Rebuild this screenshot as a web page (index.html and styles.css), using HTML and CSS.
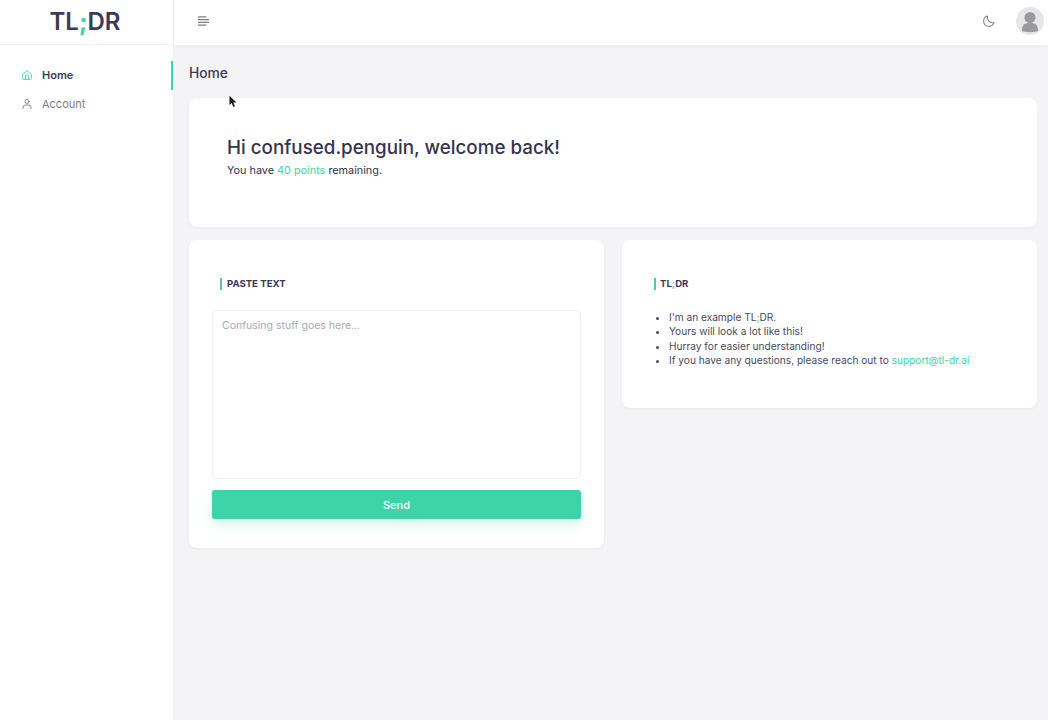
FILE: index.html
```html
<!DOCTYPE html>
<html>
<head>
    <title>TL;DR</title>
    <link rel="stylesheet" href="styles.css">
</head>
<body>
    <aside class="sidebar">
        <div class="logo">TL<span class="accent">;</span>DR</div>
        <nav class="side-nav">
            <a class="nav-item active" href="#">
                <svg class="nav-icon" viewBox="0 0 24 24"><path d="M3 10.5 12 3l9 7.5V19a2 2 0 0 1-2 2H5a2 2 0 0 1-2-2z"/><path d="M9 21v-8a1 1 0 0 1 1-1h4a1 1 0 0 1 1 1v8"/></svg>
                <span>Home</span>
            </a>
            <a class="nav-item" href="#">
                <svg class="nav-icon" viewBox="0 0 24 24"><circle cx="12" cy="7" r="4"/><path d="M4 21v-2a5 5 0 0 1 5-5h6a5 5 0 0 1 5 5v2"/></svg>
                <span>Account</span>
            </a>
        </nav>
    </aside>

    <div class="main">
        <header class="topbar">
            <button class="menu-btn" aria-label="Menu">
                <svg viewBox="0 0 14 12"><path d="M1 1.5h9M1 4.5h12M1 7.5h12M1 10.5h9"/></svg>
            </button>
            <div class="topbar-right">
                <svg class="moon" viewBox="0 0 24 24"><path d="M20.5 14.5A9 9 0 0 1 9.5 3.5a9 9 0 1 0 11 11z"/></svg>
                <div class="avatar">
                    <svg viewBox="0 0 28 28"><circle cx="14" cy="10.500" r="5.500"/><path d="M6 24c0-6 2-8 8-8s8 2 8 8c-3 1.500-13 1.500-16 0z"/></svg>
                </div>
            </div>
        </header>

        <div class="content">
            <h2 class="page-title">Home</h2>

            <section class="card hero">
                <h1>Hi confused.penguin, welcome back!</h1>
                <p>You have <span class="accent">40 points</span> remaining.</p>
            </section>

            <div class="columns">
                <section class="card paste-card">
                    <h3 class="card-title">PASTE TEXT</h3>
                    <textarea class="paste-box" placeholder="Confusing stuff goes here..."></textarea>
                    <button class="send-btn">Send</button>
                </section>

                <section class="card tldr-card">
                    <h3 class="card-title">TL<span class="accent">;</span>DR</h3>
                    <ul class="tldr-list">
                        <li>I'm an example TL<span class="accent">;</span>DR.</li>
                        <li>Yours will look a lot like this!</li>
                        <li>Hurray for easier understanding!</li>
                        <li>If you have any questions, please reach out to <a class="accent" href="#">support@tl-dr.ai</a></li>
                    </ul>
                </section>
            </div>
        </div>
    </div>

    <svg class="cursor" viewBox="0 0 10 14"><path d="M0.500 0.500v10.500l2.500-2.300 1.800 4.300 1.800-.8-1.800-4.200h3.400z"/></svg>
</body>
</html>
```

FILE: styles.css
```css
* {
    box-sizing: border-box;
}
html, body {
    height: 100%;
}
body {
    margin: 0;
    display: flex;
    overflow: hidden;
    background-color: #f4f4f7;
    color: #34344e;
    font-family: Inter, "Open Sans", sans-serif;
}
.accent {
    color: #3cd4a8;
    text-decoration: none;
}

/* sidebar */
.sidebar {
    width: 174px;
    flex-shrink: 0;
    background-color: #fff;
    border-right: 1px solid #eeeff3;
}
.logo {
    height: 45px;
    padding-right: 3px;
    border-bottom: 1px solid #f1f2f5;
    text-align: center;
    font-size: 24px;
    font-weight: 600;
    line-height: 44px;
    color: #3b3b58;
}
.logo .accent {
    font-weight: 800;
}
.side-nav {
    padding-top: 16px;
}
.nav-item {
    display: flex;
    align-items: center;
    gap: 9px;
    height: 29px;
    padding: 0 0 1px 21px;
    font-size: 11px;
    color: #7d7d8c;
    text-decoration: none;
}
.nav-item.active {
    border-right: 2px solid #3cd4a8;
    font-weight: 600;
    color: #3b3b58;
}
.nav-icon {
    width: 12px;
    height: 12px;
    fill: none;
    stroke: #85858f;
    stroke-width: 2;
    stroke-linecap: round;
    stroke-linejoin: round;
}
.active .nav-icon {
    stroke: #5edcb8;
}

/* top bar */
.main {
    flex: 1;
    min-width: 0;
}
.topbar {
    display: flex;
    align-items: center;
    justify-content: space-between;
    height: 45px;
    padding: 0 4px 3px 23px;
    background-color: #fff;
    box-shadow: 0 1px 3px rgba(50, 50, 80, 0.06);
}
.menu-btn {
    width: 13px;
    height: 12px;
    padding: 0;
    border: none;
    background: none;
}
.menu-btn svg {
    display: block;
    width: 13px;
    height: 12px;
    fill: none;
    stroke: #7d7d8c;
    stroke-width: 1.200;
}
.topbar-right {
    display: flex;
    align-items: center;
    gap: 20px;
}
.moon {
    width: 14px;
    height: 14px;
    fill: none;
    stroke: #85858f;
    stroke-width: 1.800;
    stroke-linejoin: round;
}
.avatar {
    width: 28px;
    height: 28px;
    overflow: hidden;
    border-radius: 50%;
    background-color: #e6e6e8;
}
.avatar svg {
    display: block;
    fill: #9a9a9e;
}

/* content */
.content {
    padding: 19px 11px 0 15px;
}
.page-title {
    margin: 0 0 16px;
    font-size: 13.800px;
    font-weight: 500;
    line-height: 18px;
    color: #3b3b58;
}
.card {
    background-color: #fff;
    border-radius: 8px;
    box-shadow: 0 1px 3px rgba(50, 50, 80, 0.06);
}
.hero {
    height: 129px;
    padding: 37px 38px 0;
}
.hero h1 {
    margin: 0;
    font-size: 18.800px;
    font-weight: 500;
    line-height: 26px;
    color: #34344e;
}
.hero p {
    margin: 1px 0 0;
    font-size: 10.850px;
    line-height: 16px;
}
.columns {
    display: grid;
    grid-template-columns: 1fr 1fr;
    align-items: start;
    gap: 18px;
    margin-top: 13px;
}
.card-title {
    margin: 0;
    padding-left: 5px;
    border-left: 2px solid #5cc4a4;
    font-size: 9.600px;
    font-weight: 700;
    line-height: 12px;
    color: #3b3b58;
}
.paste-card {
    height: 308px;
    padding: 38px 23px 0;
}
.paste-card .card-title {
    margin-left: 8px;
}
.paste-box {
    display: block;
    width: 100%;
    height: 169px;
    margin-top: 20px;
    padding: 8px 9px;
    resize: none;
    border: 1px solid #f0f0f3;
    border-radius: 4px;
    font-family: inherit;
    font-size: 10.500px;
    line-height: 14px;
}
.paste-box::placeholder {
    color: #a9a9b5;
    opacity: 1;
}
.send-btn {
    display: block;
    width: 100%;
    height: 29px;
    margin-top: 11px;
    border: none;
    border-radius: 3px;
    background-color: #3cd4a8;
    box-shadow: 0 6px 12px rgba(60, 212, 168, 0.22);
    color: #fff;
    font-family: inherit;
    font-size: 11px;
    font-weight: 500;
}
.tldr-card {
    height: 168px;
    padding: 38px 32px 0;
}
.tldr-card .card-title {
    padding-left: 4px;
}
.tldr-list {
    margin: 20px 0 0;
    padding-left: 15px;
    font-size: 10.150px;
    line-height: 14.400px;
    color: #4a4a5e;
}

.cursor {
    position: absolute;
    left: 229px;
    top: 95px;
    width: 9px;
    height: 13px;
    fill: #1c1c22;
}
```
